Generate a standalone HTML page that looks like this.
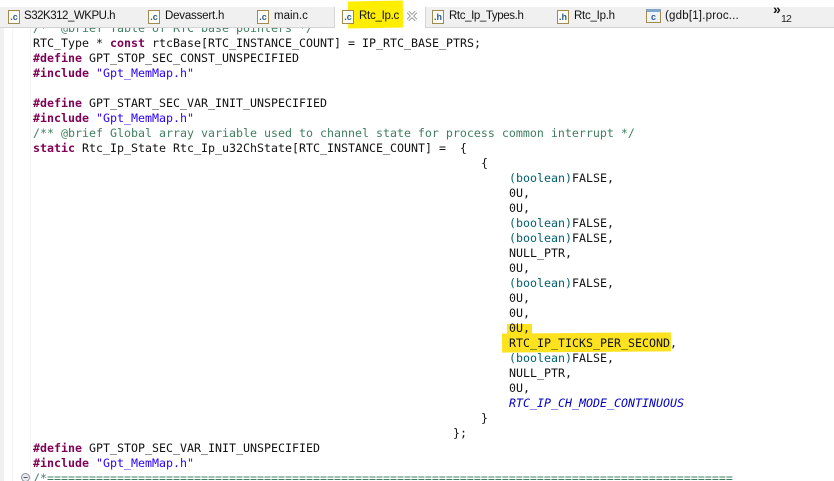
<!DOCTYPE html>
<html><head><meta charset="utf-8"><style>
html,body{margin:0;padding:0;width:834px;height:481px;overflow:hidden;background:#fff}
.a{position:absolute}
.l{position:absolute;font:11.63px/15px "DejaVu Sans Mono",monospace;white-space:pre;color:#111}
.k{color:#7f0055;font-weight:bold}
.s{color:#2a00ff}
.c{color:#3f7f5f}
.g{color:#005f6f}
.t{position:absolute;top:8px;font:11.5px/16px "Liberation Sans",sans-serif;color:#111;white-space:pre}
.i{position:absolute;top:10px;width:12px;height:14px;box-sizing:border-box;border:1px solid #a08a50;background:#fdfcf6;color:#2a5c8c;font:bold 9px/12px "Liberation Sans",sans-serif;text-align:center;overflow:hidden}
</style></head><body>
<div class="a" style="left:0;top:7px;width:834px;height:20px;background:#f0f0f0"></div>
<div class="a" style="left:0;top:27px;width:834px;height:1px;background:#d4d4d4"></div>
<div class="a" style="left:0;top:28px;width:4px;height:453px;background:#f0f0f0"></div>
<div class="a" style="left:12px;top:28px;width:1px;height:453px;background:#f4f4f4"></div>
<div class="a" style="left:30px;top:28px;width:1px;height:453px;background:#f2f2f2"></div>
<div class="a" style="left:334px;top:7px;width:92px;height:21px;background:#fff"></div>
<div class="a" style="left:334px;top:7px;width:1px;height:21px;background:#d4d4d4"></div>
<div class="a" style="left:425px;top:7px;width:1px;height:21px;background:#d4d4d4"></div>
<div class="a" style="left:348px;top:1px;width:55px;height:27px;background:#ffee00;transform:rotate(-1deg)"></div>
<div class="a" style="left:502px;top:333px;width:169px;height:19px;background:#fde31f;transform:rotate(-.4deg)"></div>
<div class="a" style="left:507px;top:324px;width:25px;height:10px;background:#fde31f"></div>

<div class="i" style="left:8px">.c</div><div class="t" style="left:24px;letter-spacing:-.48px">S32K312_WKPU.h</div>
<div class="i" style="left:148px">.c</div><div class="t" style="left:165px;letter-spacing:-.2px">Devassert.h</div>
<div class="i" style="left:257px">.c</div><div class="t" style="left:274px">main.c</div>
<div class="i" style="left:342px">.c</div><div class="t" style="left:359px;letter-spacing:-.27px">Rtc_Ip.c</div>
<svg class="a" style="left:406px;top:10px" width="12" height="12" viewBox="0 0 12 12"><path d="M2 2L10 10M10 2L2 10" fill="none" stroke="#8f8f8f" stroke-width="3.2"/><path d="M2 2L10 10M10 2L2 10" fill="none" stroke="#fff" stroke-width="1.5"/></svg>
<div class="i" style="left:432px">.h</div><div class="t" style="left:449px;letter-spacing:-.39px">Rtc_Ip_Types.h</div>
<div class="i" style="left:557px">.h</div><div class="t" style="left:574px;letter-spacing:-.25px">Rtc_Ip.h</div>
<div class="a" style="left:646px;top:9px;width:15px;height:14px;box-sizing:border-box;border:1px solid #a08a50;border-top:3px solid #7fa6cc;background:#eef3f8;color:#2a5c8c;font:bold 9px/10px 'Liberation Sans',sans-serif;text-align:center">c</div>
<div class="t" style="left:665px;letter-spacing:.2px">(gdb[1].proc...</div>
<div class="a" style="left:773px;top:2px;font:bold 14px/14px 'Liberation Sans',sans-serif;color:#111">»</div>
<div class="a" style="left:781px;top:12px;font:10.5px/14px 'Liberation Sans',sans-serif;color:#222;letter-spacing:-.8px">12</div>

<div class="a" style="left:0;top:28px;width:834px;height:453px;overflow:hidden">
<div class="l c" style="left:33px;top:-7px">/*  @brief Table of RTC base pointers */</div>
<div class="l" style="left:33px;top:8px">RTC_Type * <span class="k">const</span> rtcBase[RTC_INSTANCE_COUNT] = IP_RTC_BASE_PTRS;</div>
<div class="l" style="left:33px;top:23px"><span class="k">#define</span> GPT_STOP_SEC_CONST_UNSPECIFIED</div>
<div class="l" style="left:33px;top:38px"><span class="k">#include</span> <span class="s">"Gpt_MemMap.h"</span></div>
<div class="l" style="left:33px;top:68px"><span class="k">#define</span> GPT_START_SEC_VAR_INIT_UNSPECIFIED</div>
<div class="l" style="left:33px;top:83px"><span class="k">#include</span> <span class="s">"Gpt_MemMap.h"</span></div>
<div class="l c" style="left:33px;top:98px">/** @brief Global array variable used to channel state for process common interrupt */</div>
<div class="l" style="left:33px;top:113px"><span class="k">static</span> Rtc_Ip_State Rtc_Ip_u32ChState[RTC_INSTANCE_COUNT] =  {</div>
<div class="l" style="left:481px;top:128px">{</div>
<div class="l" style="left:509px;top:143px"><span class="g">(boolean)</span>FALSE,</div>
<div class="l" style="left:509px;top:158px">0U,</div>
<div class="l" style="left:509px;top:173px">0U,</div>
<div class="l" style="left:509px;top:188px"><span class="g">(boolean)</span>FALSE,</div>
<div class="l" style="left:509px;top:203px"><span class="g">(boolean)</span>FALSE,</div>
<div class="l" style="left:509px;top:218px">NULL_PTR,</div>
<div class="l" style="left:509px;top:233px">0U,</div>
<div class="l" style="left:509px;top:248px"><span class="g">(boolean)</span>FALSE,</div>
<div class="l" style="left:509px;top:263px">0U,</div>
<div class="l" style="left:509px;top:278px">0U,</div>
<div class="l" style="left:509px;top:293px">0U,</div>
<div class="l" style="left:509px;top:308px">RTC_IP_TICKS_PER_SECOND,</div>
<div class="l" style="left:509px;top:323px"><span class="g">(boolean)</span>FALSE,</div>
<div class="l" style="left:509px;top:338px">NULL_PTR,</div>
<div class="l" style="left:509px;top:353px">0U,</div>
<div class="l" style="left:509px;top:368px;color:#0000c0;font-style:italic">RTC_IP_CH_MODE_CONTINUOUS</div>
<div class="l" style="left:481px;top:383px">}</div>
<div class="l" style="left:453px;top:398px">};</div>
<div class="l" style="left:33px;top:413px"><span class="k">#define</span> GPT_STOP_SEC_VAR_INIT_UNSPECIFIED</div>
<div class="l" style="left:33px;top:428px"><span class="k">#include</span> <span class="s">"Gpt_MemMap.h"</span></div>
<div class="l c" style="left:33px;top:443px">/*==================================================================================================</div>
</div>
<svg class="a" style="left:21px;top:473px" width="9" height="8" viewBox="0 0 9 8"><circle cx="4.5" cy="4.5" r="4" fill="#e8eaee" stroke="#8a94a0"/><path d="M2.5 4.5H6.5" stroke="#556"/></svg>
</body></html>
